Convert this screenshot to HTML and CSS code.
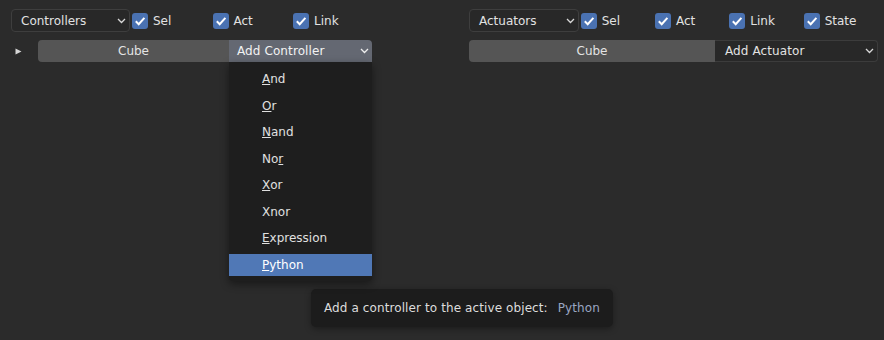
FILE: index.html
```html
<!DOCTYPE html>
<html lang="en">

<head>
    <meta charset="UTF-8">
    <meta name="viewport" content="width=device-width, initial-scale=1.0">
    <title>Logic Editor</title>
    <link rel="stylesheet" href="styles.css">
</head>

<body>
<main class="logic">
    <!-- controllers -->
    <section class="panel panel-ctrl">
        <div class="row-top">
            <div class="dropdown dd-ctrl">
                <span>Controllers</span>
                <svg class="chev" width="9" height="6" viewBox="0 0 9 6"><path d="M1 1 L4.5 4.5 L8 1" fill="none" stroke="#d8d8d8" stroke-width="1.3"/></svg>
            </div>
            <label class="check"><span class="box"><svg width="16" height="16" viewBox="0 0 16 16"><path d="M3.8 8.3 L6.7 11.2 L12.4 4.8" fill="none" stroke="#fff" stroke-width="2"/></svg></span>Sel</label>
            <label class="check"><span class="box"><svg width="16" height="16" viewBox="0 0 16 16"><path d="M3.8 8.3 L6.7 11.2 L12.4 4.8" fill="none" stroke="#fff" stroke-width="2"/></svg></span>Act</label>
            <label class="check"><span class="box"><svg width="16" height="16" viewBox="0 0 16 16"><path d="M3.8 8.3 L6.7 11.2 L12.4 4.8" fill="none" stroke="#fff" stroke-width="2"/></svg></span>Link</label>
        </div>
        <div class="row-obj">
            <span class="expand"><svg width="7" height="7" viewBox="0 0 7 7"><path d="M0.5 0.5 L6.5 3.5 L0.5 6.5 Z" fill="#d6d6d6"/></svg></span>
            <div class="btn-obj">Cube</div>
            <div class="add-wrap">
                <div class="btn-add open">
                    <span>Add Controller</span>
                    <svg class="chev" width="9" height="6" viewBox="0 0 9 6"><path d="M1 1 L4.5 4.5 L8 1" fill="none" stroke="#eee" stroke-width="1.3"/></svg>
                </div>
                <ul class="menu">
                    <li><u>A</u>nd</li>
                    <li><u>O</u>r</li>
                    <li><u>N</u>and</li>
                    <li>No<u>r</u></li>
                    <li><u>X</u>or</li>
                    <li>Xnor</li>
                    <li><u>E</u>xpression</li>
                    <li class="active"><u>P</u>ython</li>
                </ul>
            </div>
        </div>
    </section>

    <!-- actuators -->
    <section class="panel panel-act">
        <div class="row-top">
            <div class="dropdown dd-act">
                <span>Actuators</span>
                <svg class="chev" width="9" height="6" viewBox="0 0 9 6"><path d="M1 1 L4.5 4.5 L8 1" fill="none" stroke="#d8d8d8" stroke-width="1.3"/></svg>
            </div>
            <label class="check"><span class="box"><svg width="16" height="16" viewBox="0 0 16 16"><path d="M3.8 8.3 L6.7 11.2 L12.4 4.8" fill="none" stroke="#fff" stroke-width="2"/></svg></span>Sel</label>
            <label class="check"><span class="box"><svg width="16" height="16" viewBox="0 0 16 16"><path d="M3.8 8.3 L6.7 11.2 L12.4 4.8" fill="none" stroke="#fff" stroke-width="2"/></svg></span>Act</label>
            <label class="check"><span class="box"><svg width="16" height="16" viewBox="0 0 16 16"><path d="M3.8 8.3 L6.7 11.2 L12.4 4.8" fill="none" stroke="#fff" stroke-width="2"/></svg></span>Link</label>
            <label class="check"><span class="box"><svg width="16" height="16" viewBox="0 0 16 16"><path d="M3.8 8.3 L6.7 11.2 L12.4 4.8" fill="none" stroke="#fff" stroke-width="2"/></svg></span>State</label>
        </div>
        <div class="row-obj">
            <div class="btn-obj">Cube</div>
            <div class="btn-add">
                <span>Add Actuator</span>
                <svg class="chev" width="9" height="6" viewBox="0 0 9 6"><path d="M1 1 L4.5 4.5 L8 1" fill="none" stroke="#d8d8d8" stroke-width="1.3"/></svg>
            </div>
        </div>
    </section>

    <div class="tooltip">Add a controller to the active object:<span class="py">Python</span></div>
</main>
</body>
</html>
```

FILE: styles.css
```css
body {
    margin: 0;
    padding: 0;
    background-color: #2b2b2b;
    font-family: 'DejaVu Sans', 'Noto Sans', sans-serif;
    font-size: 12px;
    color: #e2e2e2;
}

.logic {
    position: relative;
    display: flex;
    padding: 9px 0 0 11px;
    height: 331px;
}

.panel-ctrl {
    width: 458px;
}

.panel-act {
    width: 409px;
}

.row-top {
    display: flex;
    align-items: center;
    height: 23px;
}

.dropdown {
    display: flex;
    align-items: center;
    justify-content: space-between;
    height: 23px;
    box-sizing: border-box;
    padding: 0 3px 0 9px;
    border: 1px solid #3e3e3e;
    border-radius: 4px;
    background-color: #282828;
    margin-right: 2px;
}

.dd-ctrl {
    width: 119px;
}

.dd-act {
    width: 110px;
}

.check {
    display: flex;
    align-items: center;
    width: 80.5px;
}

.panel-act .check {
    width: 74.6px;
}

.box {
    width: 16px;
    height: 16px;
    border-radius: 3px;
    background-color: #4a72b2;
    margin-right: 5px;
    display: flex;
}

.row-obj {
    display: flex;
    margin-top: 8px;
    height: 22px;
}

.expand {
    width: 27px;
    display: flex;
    align-items: center;
    padding-left: 4px;
    box-sizing: border-box;
}

.btn-obj {
    display: flex;
    align-items: center;
    justify-content: center;
    background-color: #555555;
    border-radius: 4px 0 0 4px;
    color: #e4e4e4;
}

.panel-ctrl .btn-obj {
    width: 191px;
}

.panel-act .btn-obj {
    width: 246px;
}

.add-wrap {
    position: relative;
    width: 143px;
}

.btn-add {
    display: flex;
    align-items: center;
    justify-content: space-between;
    box-sizing: border-box;
    height: 22px;
    padding: 0 3px 0 8px;
    border-radius: 0 4px 4px 0;
    letter-spacing: 0.1px;
}

.btn-add.open {
    background-color: #646872;
    border-radius: 0 4px 0 0;
    color: #f2f2f2;
}

.panel-act .btn-add {
    width: 163px;
    padding-left: 10px;
    border: 1px solid #3c3c3c;
    border-left: none;
    background-color: #282828;
}

.menu {
    position: absolute;
    top: 22px;
    left: 0;
    width: 143px;
    margin: 0;
    padding: 6px 0 5px;
    list-style: none;
    background-color: #1e1e1e;
    border-radius: 0 0 4px 4px;
    box-shadow: 0 3px 8px rgba(0, 0, 0, 0.45);
    z-index: 5;
}

.menu li {
    height: 22px;
    line-height: 22px;
    padding-left: 33px;
    margin-bottom: 4.57px;
    color: #e0e0e0;
}

.menu li:last-child {
    margin-bottom: 0;
}

.menu li.active {
    background-color: #5078b6;
    color: #ffffff;
}

.tooltip {
    position: absolute;
    left: 311px;
    top: 289px;
    width: 302px;
    height: 38px;
    box-sizing: border-box;
    padding-left: 13px;
    line-height: 38px;
    white-space: nowrap;
    letter-spacing: 0.1px;
    background-color: #1c1c1c;
    border-radius: 5px;
    box-shadow: 0 2px 6px rgba(0, 0, 0, 0.35);
    color: #dcdcdc;
}

.tooltip .py {
    margin-left: 10px;
    color: #9aa6c2;
}
```
